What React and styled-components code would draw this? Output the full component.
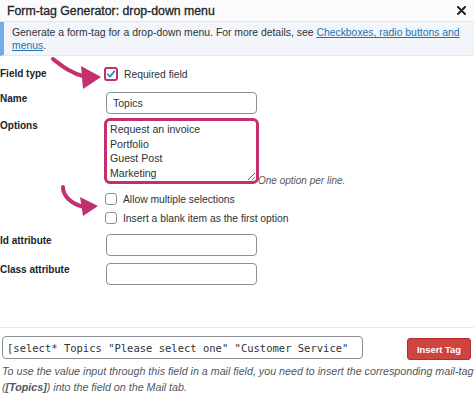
import React from 'react';
import styled, { createGlobalStyle } from 'styled-components';

const GlobalStyle = createGlobalStyle`
  html, body {
    margin: 0;
    padding: 0;
    background: #fff;
  }
  body {
    font-family: "Liberation Sans", Arial, sans-serif;
    color: #1d2327;
    overflow: hidden;
  }
`;

const PINK = '#c2306e';

const Panel = styled.div`
  position: relative;
  width: 474px;
  height: 393px;
  overflow: hidden;
`;

const TitleBar = styled.div`
  display: flex;
  align-items: center;
  justify-content: space-between;
  height: 21px;
  padding: 0 8px 0 7px;
  background: #fbfbfb;
  border-bottom: 1px solid #e2e4e7;
`;

const Title = styled.h1`
  margin: 0;
  font-size: 12.3px;
  font-weight: 400;
  -webkit-text-stroke: 0.3px #1d2327;
  color: #1d2327;
`;

const Notice = styled.div`
  padding: 4px 8px 3px 8px;
  border-left: 4px solid #72aee6;
  border-bottom: 1px solid #e5e8eb;
  background: #f2f6fa;
  font-size: 10.4px;
  line-height: 13px;
  color: #2c3338;
  white-space: nowrap;
`;

const Link = styled.a`
  color: #2271b1;
  text-decoration: underline;
`;

const Form = styled.div`
  display: flex;
  flex-direction: column;
`;

const Row = styled.div`
  display: grid;
  grid-template-columns: 104px 1fr;
  align-items: ${(p) => (p.$center ? 'center' : 'start')};
  margin-top: ${(p) => p.$top}px;
`;

const Label = styled.div`
  padding-top: ${(p) => p.$pad || 0}px;
  font-size: 10px;
  font-weight: 700;
  line-height: 14px;
  color: #1d2327;
`;

const Field = styled.div`
  display: flex;
  align-items: ${(p) => (p.$bottom ? 'flex-end' : 'center')};
`;

const TextInput = styled.input`
  box-sizing: border-box;
  width: 151px;
  height: 22px;
  margin: 0 0 0 2px;
  padding: 0 6px;
  border: 1px solid #8c8f94;
  border-radius: 4px;
  font-family: "Liberation Sans", Arial, sans-serif;
  font-size: 10.5px;
  color: #2c3338;
  background: #fff;
`;

const Options = styled.textarea`
  box-sizing: border-box;
  width: 155px;
  height: 66px;
  margin: 0;
  padding: 1px 3px;
  border: 3px solid ${PINK};
  border-radius: 6px;
  font-family: "Liberation Sans", Arial, sans-serif;
  font-size: 10.6px;
  line-height: 14.7px;
  color: #2c3338;
  overflow: hidden;
  resize: both;
`;

const Hint = styled.span`
  margin: 0 0 -3px -1px;
  font-size: 10px;
  font-style: italic;
  line-height: 12px;
  color: #50575e;
`;

const CheckList = styled.div`
  display: flex;
  flex-direction: column;
  gap: 5px;
`;

const CheckLine = styled.label`
  display: flex;
  align-items: center;
  gap: 6px;
  height: 14px;
  font-size: 10.3px;
  color: #2c3338;
  white-space: nowrap;
`;

const Box = styled.span`
  box-sizing: border-box;
  display: flex;
  align-items: center;
  justify-content: center;
  width: ${(p) => (p.$big ? 14 : 12)}px;
  height: ${(p) => (p.$big ? 14 : 12)}px;
  margin-left: ${(p) => (p.$big ? 0 : 1)}px;
  border: ${(p) => (p.$big ? `2px solid ${PINK}` : '1px solid #8c8f94')};
  border-radius: 3px;
  background: #fff;
`;

const Footer = styled.div`
  margin-top: 42px;
  padding: 8px 3px 0 2px;
  border-top: 1px solid #e8e9eb;
`;

const TagRow = styled.div`
  display: flex;
  align-items: flex-start;
  justify-content: space-between;
`;

const TagInput = styled.input`
  box-sizing: border-box;
  width: 361px;
  height: 23px;
  margin: 0;
  padding: 0 4px;
  border: 1px solid #8c8f94;
  border-radius: 4px;
  font-family: "DejaVu Sans Mono", "Liberation Mono", monospace;
  font-size: 10.5px;
  color: #2c3338;
  background: #fff;
`;

const InsertButton = styled.button`
  height: 22px;
  margin-top: 2px;
  padding: 0 9px;
  border: 1px solid #b32d2e;
  border-radius: 3px;
  background: #cf4340;
  color: #fff;
  font-family: "Liberation Sans", Arial, sans-serif;
  font-size: 9.4px;
  font-weight: 700;
`;

const Help = styled.p`
  margin: 4px 0 0 0;
  font-size: 10.7px;
  font-style: italic;
  line-height: 15.5px;
  color: #50575e;
  white-space: nowrap;
`;

const Arrow = styled.svg`
  position: absolute;
  left: 0;
  top: 0;
  pointer-events: none;
`;

function CloseIcon() {
  return (
    <svg width="9" height="9" viewBox="0 0 9 9">
      <path d="M1 1 L8 8 M8 1 L1 8" stroke="#1d2327" strokeWidth="2" strokeLinecap="round" />
    </svg>
  );
}

function Check() {
  return (
    <svg width="10" height="10" viewBox="0 0 10 10">
      <path d="M1.8 5.2 L4 7.6 L8.4 2.2" fill="none" stroke="#3582c4" strokeWidth="1.7" strokeLinecap="round" strokeLinejoin="round" />
    </svg>
  );
}

export default function App() {
  return (
    <Panel>
      <GlobalStyle />
      <TitleBar>
        <Title>Form-tag Generator: drop-down menu</Title>
        <CloseIcon />
      </TitleBar>
      <Notice>
        Generate a form-tag for a drop-down menu. For more details, see{' '}
        <Link href="#">Checkboxes, radio buttons and<br />menus</Link>.
      </Notice>

      <Form>
        <Row $center $top={11}>
          <Label>Field type</Label>
          <CheckLine>
            <Box $big><Check /></Box>
            Required field
          </CheckLine>
        </Row>
        <Row $top={11}>
          <Label>Name</Label>
          <Field>
            <TextInput defaultValue="Topics" />
          </Field>
        </Row>
        <Row $top={4}>
          <Label $pad={1}>Options</Label>
          <Field $bottom>
            <Options defaultValue={'Request an invoice\nPortfolio\nGuest Post\nMarketing'} />
            <Hint>One option per line.</Hint>
          </Field>
        </Row>
        <Row $top={8}>
          <div />
          <CheckList>
            <CheckLine><Box /> Allow multiple selections</CheckLine>
            <CheckLine><Box /> Insert a blank item as the first option</CheckLine>
          </CheckList>
        </Row>
        <Row $top={9}>
          <Label>Id attribute</Label>
          <Field><TextInput /></Field>
        </Row>
        <Row $top={7}>
          <Label>Class attribute</Label>
          <Field><TextInput /></Field>
        </Row>
      </Form>

      <Footer>
        <TagRow>
          <TagInput readOnly value={'[select* Topics "Please select one" "Customer Service"'} />
          <InsertButton>Insert Tag</InsertButton>
        </TagRow>
        <Help>
          To use the value input through this field in a mail field, you need to insert the corresponding mail-tag
          <br />
          (<b>[Topics]</b>) into the field on the Mail tab.
        </Help>
      </Footer>

      <Arrow width="474" height="393" viewBox="0 0 474 393">
        <path d="M53 59 C62 66 72 74 86 77" fill="none" stroke={PINK} strokeWidth="4" strokeLinecap="round" />
        <path d="M101 77 L81 66 L83 89 Z" fill={PINK} />
        <path d="M63 187 C63 196 71 204 84 207" fill="none" stroke={PINK} strokeWidth="4" strokeLinecap="round" />
        <path d="M98 206 L80 197 L83 216 Z" fill={PINK} />
      </Arrow>
    </Panel>
  );
}
